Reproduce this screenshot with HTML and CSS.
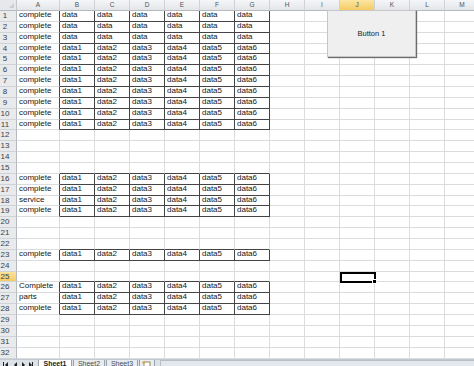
FILE: index.html
```html
<!DOCTYPE html>
<html>
    <head>
        <meta charset="UTF-8">
        <title>Book1 - Sheet1</title>
        <meta name="viewport" content="width=device-width, initial-scale=1.0">
        <link rel="stylesheet" href="styles.css">
    </head>
    <body>
        <main class="workbook">
            <div class="sheet"></div>
            <button class="form-button">Button 1</button>
            <div class="tabbar">
                <div class="nav">
                    <svg width="36" height="7" viewBox="0 0 36 7">
                        <rect x="3" y="1" width="1" height="6" fill="#222"/>
                        <path d="M8 1 L5 4 L8 7 Z" fill="#222"/>
                        <path d="M17 1 L14 4 L17 7 Z" fill="#222"/>
                        <path d="M22 1 L25 4 L22 7 Z" fill="#222"/>
                        <path d="M29 1 L32 4 L29 7 Z" fill="#222"/>
                        <rect x="32" y="1" width="1" height="6" fill="#222"/>
                    </svg>
                </div>
                <div class="tab active">Sheet1</div>
                <div class="tab">Sheet2</div>
                <div class="tab">Sheet3</div>
                <div class="tab new">
                    <svg width="12" height="8" viewBox="0 0 12 8">
                        <rect x="3" y="1" width="6" height="7" fill="#fff" stroke="#9a8a5a" stroke-width="1"/>
                        <path d="M1 1 L3 3 M3 0 L3 2" stroke="#e0a020" stroke-width="1"/>
                    </svg>
                </div>
                <div class="hscroll"></div>
            </div>
        </main>
        <script>
            // Sheet contents
            const columns = ['A', 'B', 'C', 'D', 'E', 'F', 'G', 'H', 'I', 'J', 'K', 'L', 'M'];
            const plain = ['data', 'data', 'data', 'data', 'data', 'data'];
            const numbered = ['data1', 'data2', 'data3', 'data4', 'data5', 'data6'];
            const content = {};

            for(let r = 1; r <= 3; r++) content[r] = ['complete', ...plain];
            for(let r = 4; r <= 11; r++) content[r] = ['complete', ...numbered];
            content[16] = ['complete', ...numbered];
            content[17] = ['complete', ...numbered];
            content[18] = ['service', ...numbered];
            content[19] = ['complete', ...numbered];
            content[23] = ['complete', ...numbered];
            content[26] = ['Complete', ...numbered];
            content[27] = ['parts', ...numbered];
            content[28] = ['complete', ...numbered];

            // Ranges with borders (columns B to G)
            const blocks = [[1, 11], [16, 19], [23, 23], [26, 28]];
            const inBlock = r => blocks.some(b => r >= b[0] && r <= b[1]);
            const aboveBlock = r => blocks.some(b => r === b[0] - 1);

            const activeRow = 25;
            const activeCol = 'J';

            const sheet = document.querySelector('.sheet');

            const cell = (classes, text) =>
            {
                const div = document.createElement('div');
                div.className = classes;
                if(text) div.textContent = text;
                sheet.appendChild(div);
            };

            // Column headers
            cell('cell corner');
            columns.forEach(c => cell('cell col-head' + (c === activeCol ? ' active' : ''), c));

            // Rows
            for(let r = 1; r <= 32; r++)
            {
                cell('cell row-head' + (r === activeRow ? ' active' : ''), String(r));
                const values = content[r] || [];

                columns.forEach((c, i) =>
                {
                    let classes = 'cell';
                    if(inBlock(r) && i === 0) classes += ' edge-r';
                    if(inBlock(r) && i >= 1 && i <= 6) classes += ' boxed';
                    if(aboveBlock(r) && i >= 1 && i <= 6) classes += ' edge-b';
                    if(r === activeRow && c === activeCol) classes += ' selected';
                    cell(classes, values[i]);
                });
            }
        </script>
    </body>
</html>
```

FILE: styles.css
```css
body
{
    margin: 0;
    padding: 0;
    background: #fff;
    font-family: "Liberation Sans", Arial, sans-serif;
    overflow: hidden;
}
.workbook
{
    position: relative;
    width: 474px;
    height: 366px;
    overflow: hidden;
}

/* Grid */
.sheet
{
    display: grid;
    grid-template-columns: 17px 43px repeat(12, 35px);
    grid-template-rows: 11px;
    grid-auto-rows: 10.87px;
}
.sheet .cell
{
    box-sizing: border-box;
    padding-left: 2px;
    border-right: 1px solid #dadcdd;
    border-bottom: 1px solid #dadcdd;
    font-size: 8px;
    line-height: 7px;
    color: #151515;
    white-space: nowrap;
}
.sheet .edge-r { border-right-color: #444 }
.sheet .edge-b { border-bottom-color: #444 }
.sheet .boxed { border-right-color: #444; border-bottom-color: #444 }

.sheet .corner
{
    position: relative;
    background: #e6e8eb;
    border-right-color: #c4c8cd;
    border-bottom-color: #b5bac0;
}
.sheet .corner::after
{
    content: "";
    position: absolute;
    right: 2px;
    bottom: 2px;
    border-left: 5px solid transparent;
    border-bottom: 5px solid #c9cdd2;
}
.sheet .col-head
{
    padding: 0;
    background: linear-gradient(#f5f6f8, #e3e5e8);
    border-right-color: #cfd2d6;
    border-bottom-color: #b5bac0;
    text-align: center;
    font-size: 6.5px;
    line-height: 10px;
    color: #505356;
}
.sheet .row-head
{
    padding: 0 6px 0 0;
    background: #e8eaec;
    border-right-color: #b5bac0;
    border-bottom-color: #cfd2d6;
    text-align: center;
    font-size: 8px;
    line-height: 9px;
    color: #3b4047;
}
.sheet .col-head.active { background: linear-gradient(#fbe6a4, #f6cb62) }
.sheet .row-head.active { background: linear-gradient(#fbe39a, #f5cc66) }

/* Active cell */
.sheet .selected { position: relative }
.sheet .selected::after
{
    content: "";
    position: absolute;
    left: 0;
    top: 0;
    right: -2px;
    bottom: -2px;
    border: 2px solid #000;
}
.sheet .selected::before
{
    content: "";
    position: absolute;
    right: -3px;
    bottom: -3px;
    width: 3px;
    height: 3px;
    background: #000;
    border: 1px solid #fff;
    z-index: 1;
}

/* Form control floating over the sheet */
.form-button
{
    position: absolute;
    left: 327px;
    top: 10px;
    width: 89px;
    height: 47px;
    padding: 0;
    background: #efefef;
    border: 1px solid #c6c6c6;
    box-shadow: 1px 1px 1px #6d6d6d;
    font-family: "Liberation Sans", Arial, sans-serif;
    font-size: 7.5px;
    color: #222;
}

/* Sheet tabs */
.tabbar
{
    display: flex;
    height: 16px;
    background: #dde2e8;
    border-top: 1px solid #c3c9d0;
}
.tabbar .nav
{
    width: 36px;
    padding-top: 1px;
}
.tabbar .nav svg { display: block }
.tabbar .tab
{
    box-sizing: border-box;
    width: 32px;
    margin-right: 1px;
    border-left: 1px solid #98a1ac;
    border-right: 1px solid #98a1ac;
    background: #e9edf1;
    text-align: center;
    font-size: 7px;
    line-height: 7px;
    color: #4a4f55;
}
.tabbar .tab.active
{
    width: 34px;
    margin-left: 2px;
    background: #fff;
    font-weight: bold;
    color: #222;
}
.tabbar .tab.new
{
    width: 16px;
    padding-top: 1px;
}
.tabbar .tab.new svg { display: block; margin: 0 auto }
.tabbar .hscroll
{
    flex: 1;
    margin-left: 4px;
    background: #e4e7eb;
    border-top: 1px solid #b7bdc4;
    border-left: 1px solid #b7bdc4;
}
```
